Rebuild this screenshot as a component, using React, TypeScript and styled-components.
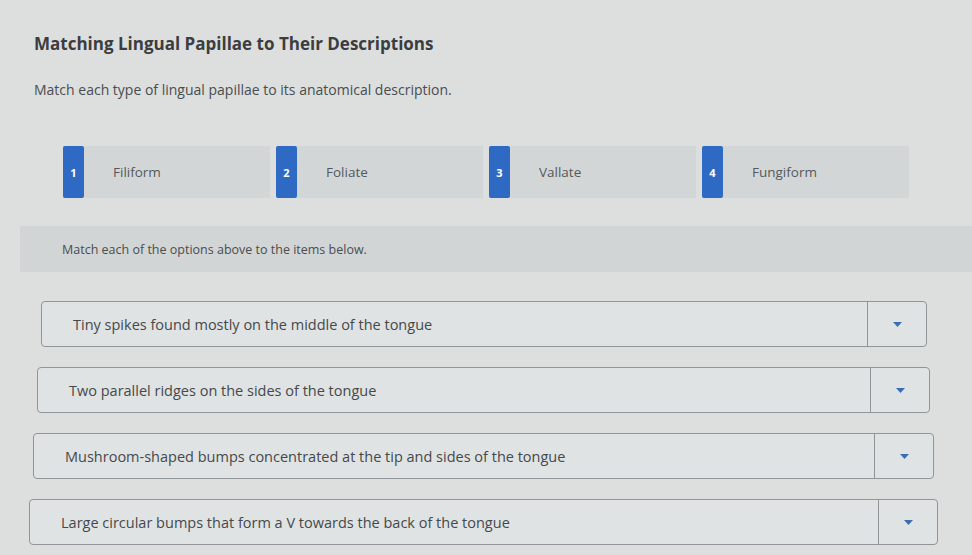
import React from "react";
import styled, { createGlobalStyle } from "styled-components";

const Global = createGlobalStyle`
  html, body { margin: 0; padding: 0; }
  body {
    background: #dcdfde;
    font-family: "Open Sans", "Liberation Sans", Arial, sans-serif;
    width: 972px;
    height: 555px;
    overflow: hidden;
  }
`;

const Page = styled.div`
  display: flex;
  flex-direction: column;
  width: 972px;
  height: 555px;
`;

const Header = styled.header`
  display: flex;
  flex-direction: column;
  padding-left: 34px;
`;

const Title = styled.h1`
  margin: 34px 0 0 0;
  font-size: 17px;
  line-height: 20px;
  font-weight: 700;
  color: #3b3d3e;
`;

const Subtitle = styled.p`
  margin: 26px 0 0 0;
  font-size: 14px;
  line-height: 20px;
  color: #4a4d4f;
`;

const Options = styled.div`
  display: grid;
  grid-template-columns: repeat(4, 207px);
  column-gap: 6px;
  margin: 46px 0 0 63px;
  height: 52px;
`;

const OptionCard = styled.div`
  display: flex;
  align-items: center;
  background: #d3d6d6;
`;

const Badge = styled.span`
  display: flex;
  align-items: center;
  justify-content: center;
  width: 21px;
  align-self: stretch;
  background: #2e69c4;
  border-radius: 2px;
  color: #ffffff;
  font-size: 11px;
  font-weight: 700;
`;

const OptionLabel = styled.span`
  margin-left: 29px;
  font-size: 13.5px;
  color: #55595b;
`;

const Instruction = styled.div`
  display: flex;
  align-items: center;
  margin: 28px 0 0 20px;
  height: 46px;
  padding-left: 42px;
  background: #d2d5d5;
  font-size: 12.5px;
  color: #4a4d4f;
`;

const Rows = styled.div`
  display: flex;
  flex-direction: column;
  gap: 20px;
  margin-top: 29px;
`;

const Row = styled.div<{ $left: number; $right: number }>`
  display: flex;
  height: 46px;
  margin-left: ${(p) => p.$left}px;
  margin-right: ${(p) => p.$right}px;
  border: 1px solid #8f9598;
  border-radius: 4px;
  background: #e0e3e3;
  box-sizing: border-box;
`;

const RowText = styled.div`
  flex: 1;
  display: flex;
  align-items: center;
  padding-left: 31px;
  font-size: 14.5px;
  color: #45494b;
  border-right: 1px solid #8f9598;
`;

const Dropdown = styled.div`
  width: 58px;
  display: flex;
  align-items: center;
  justify-content: center;
`;

const Caret = () => (
  <svg width="9" height="5" viewBox="0 0 9 5">
    <path d="M0 0 H9 L4.5 5 Z" fill="#3a6db4" />
  </svg>
);

const options = ["Filiform", "Foliate", "Vallate", "Fungiform"];

const items = [
  { text: "Tiny spikes found mostly on the middle of the tongue", left: 41, right: 45 },
  { text: "Two parallel ridges on the sides of the tongue", left: 37, right: 42 },
  { text: "Mushroom-shaped bumps concentrated at the tip and sides of the tongue", left: 33, right: 38 },
  { text: "Large circular bumps that form a V towards the back of the tongue", left: 29, right: 34 },
];

export default function App() {
  return (
    <>
      <Global />
      <Page>
        <Header>
          <Title>Matching Lingual Papillae to Their Descriptions</Title>
          <Subtitle>Match each type of lingual papillae to its anatomical description.</Subtitle>
        </Header>
        <Options>
          {options.map((o, i) => (
            <OptionCard key={o}>
              <Badge>{i + 1}</Badge>
              <OptionLabel>{o}</OptionLabel>
            </OptionCard>
          ))}
        </Options>
        <Instruction>Match each of the options above to the items below.</Instruction>
        <Rows>
          {items.map((it) => (
            <Row key={it.text} $left={it.left} $right={it.right}>
              <RowText>{it.text}</RowText>
              <Dropdown>
                <Caret />
              </Dropdown>
            </Row>
          ))}
        </Rows>
      </Page>
    </>
  );
}
